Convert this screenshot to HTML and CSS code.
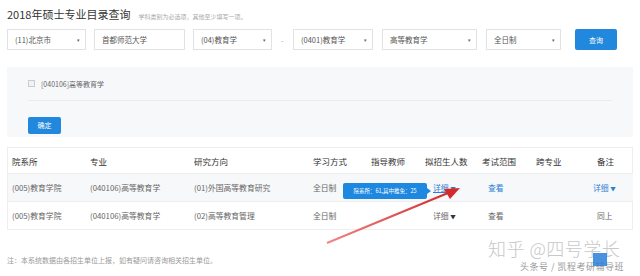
FILE: index.html
```html
<!DOCTYPE html>
<html lang="zh-CN">
<head>
    <meta charset="UTF-8">
    <meta name="viewport" content="width=device-width, initial-scale=1.0">
    <title>2018年硕士专业目录查询</title>
    <link rel="stylesheet" href="styles.css">
</head>
<body>
    <div class="page">
        <div class="title-row">
            <h2>2018年硕士专业目录查询</h2>
            <span class="hint">学科类别为必选项，其他至少填写一项。</span>
        </div>

        <div class="search-row">
            <div class="field select w79">(11)北京市<span class="caret">▾</span></div>
            <div class="field w91">首都师范大学</div>
            <div class="field select w79">(04)教育学<span class="caret">▾</span></div>
            <span class="dash">-</span>
            <div class="field select w80">(0401)教育学<span class="caret">▾</span></div>
            <div class="field select w95">高等教育学<span class="caret">▾</span></div>
            <div class="field select w75">全日制<span class="caret">▾</span></div>
            <button class="btn btn-search">查询</button>
        </div>

        <div class="panel">
            <label class="check-row">
                <span class="checkbox"></span>[040106]高等教育学
            </label>
            <div class="panel-foot">
                <button class="btn btn-ok">确定</button>
            </div>
        </div>

        <div class="result">
            <table>
                <colgroup>
                    <col style="width:78px">
                    <col style="width:104px">
                    <col style="width:119px">
                    <col style="width:58px">
                    <col style="width:54px">
                    <col style="width:57px">
                    <col style="width:54px">
                    <col style="width:61px">
                    <col style="width:40px">
                </colgroup>
                <thead>
                    <tr>
                        <th>院系所</th>
                        <th>专业</th>
                        <th>研究方向</th>
                        <th>学习方式</th>
                        <th>指导教师</th>
                        <th>拟招生人数</th>
                        <th>考试范围</th>
                        <th>跨专业</th>
                        <th>备注</th>
                    </tr>
                </thead>
                <tbody>
                    <tr class="striped">
                        <td>(005)教育学院</td>
                        <td>(040106)高等教育学</td>
                        <td>(01)外国高等教育研究</td>
                        <td>全日制</td>
                        <td></td>
                        <td class="more"><a class="link underline">详细</a> <span class="tri link">▼</span></td>
                        <td class="mid"><a class="link">查看</a></td>
                        <td></td>
                        <td class="last"><a class="link">详细 <span class="tri link">▼</span></a></td>
                    </tr>
                    <tr>
                        <td>(005)教育学院</td>
                        <td>(040106)高等教育学</td>
                        <td>(02)高等教育管理</td>
                        <td>全日制</td>
                        <td></td>
                        <td class="more">详细 <span class="tri">▼</span></td>
                        <td class="mid">查看</td>
                        <td></td>
                        <td class="same">同上</td>
                    </tr>
                </tbody>
            </table>
            <div class="tooltip">院系所：61,其中推免：25</div>
        </div>

        <p class="note">注：本系统数据由各招生单位上报，如有疑问请咨询相关招生单位。</p>

        <svg class="arrow" width="640" height="276" viewBox="0 0 640 276">
            <defs>
                <linearGradient id="arrowGrad" x1="0" y1="1" x2="1" y2="0">
                    <stop offset="0" stop-color="#e88" />
                    <stop offset="1" stop-color="#d42a2a" />
                </linearGradient>
            </defs>
            <line x1="327" y1="243" x2="448" y2="193" stroke="url(#arrowGrad)" stroke-width="2" />
            <polygon points="460,188 444,189 450,199" fill="#d42a2a" />
        </svg>

        <div class="watermark">
            <div class="wm-big">知乎 @四号学长</div>
            <div class="wm-small">头条号 / 凯程考研辅导班</div>
            <span class="wm-badge"></span>
        </div>
    </div>
</body>
</html>
```

FILE: styles.css
```css
body {
    margin: 0;
    padding: 0;
    background-color: #fff;
    font-family: "Noto Sans CJK SC", "Liberation Sans", sans-serif;
    color: #555;
}

.page {
    position: relative;
    width: 640px;
    height: 276px;
    padding: 0 7px;
    box-sizing: border-box;
    overflow: hidden;
}

.title-row {
    display: flex;
    align-items: baseline;
    height: 29px;
    padding-top: 6px;
    box-sizing: border-box;
}

h2 {
    margin: 0;
    font-size: 11px;
    font-weight: normal;
    color: #333;
    line-height: 16px;
}

.hint {
    margin-left: 8px;
    font-size: 6px;
    color: #aaa;
}

.search-row {
    display: flex;
    align-items: center;
    height: 21px;
}

.field {
    position: relative;
    height: 21px;
    margin-right: 8px;
    padding-left: 7px;
    border: 1px solid #e2e2e2;
    background-color: #fff;
    box-sizing: border-box;
    font-size: 7.5px;
    line-height: 19px;
    color: #555;
}

.caret {
    position: absolute;
    right: 5px;
    top: 0;
    font-size: 5px;
    color: #666;
}

.w79 { width: 79px; }
.w91 { width: 91px; }
.w80 { width: 80px; margin-right: 9px; }
.w95 { width: 95px; margin-right: 9px; }
.w75 { width: 75px; margin-right: 14px; }

.dash {
    width: 12px;
    margin-left: 1px;
    font-size: 7px;
    color: #999;
}

.btn {
    border: none;
    border-radius: 2px;
    background-color: #2188dd;
    color: #fff;
    font-family: inherit;
    padding: 0;
    cursor: pointer;
}

.btn-search {
    width: 42px;
    height: 21px;
    font-size: 7px;
}

.panel {
    margin-top: 17px;
    height: 70px;
    padding: 0 21px 0 21px;
    background-color: #f7f8fa;
    box-sizing: border-box;
}

.check-row {
    display: flex;
    align-items: center;
    height: 33px;
    border-bottom: 1px solid #ececee;
    font-size: 7px;
    color: #666;
}

.checkbox {
    width: 5px;
    height: 5px;
    margin-right: 6px;
    border: 1px solid #ccc;
    background-color: #f2f2f2;
}

.panel-foot {
    padding-top: 8px;
}

.btn-ok {
    width: 33px;
    height: 17px;
    font-size: 7px;
}

.result {
    position: relative;
    margin-top: 10px;
    border: 1px solid #eee;
    border-bottom: none;
}

table {
    width: 625px;
    table-layout: fixed;
    border-collapse: collapse;
}

th, td {
    padding: 0 0 0 4px;
    text-align: left;
    white-space: nowrap;
    border-bottom: 1px solid #eee;
}

th {
    height: 25px;
    font-size: 8.5px;
    font-weight: normal;
    color: #333;
}

td {
    height: 27px;
    font-size: 7.8px;
    color: #666;
}

tr.striped td {
    background-color: #f7f8fa;
}

.link {
    color: #2a7fd4;
}

.underline {
    text-decoration: underline;
}

.tri {
    font-size: 5.5px;
    color: #333;
}

.tri.link {
    color: #2a7fd4;
}

td.more {
    padding-left: 12px;
}

td.mid {
    padding-left: 10px;
}

td.last {
    padding-left: 0;
}

td.same {
    padding-left: 4px;
    color: #666;
}

.tooltip {
    position: absolute;
    left: 335px;
    top: 35px;
    width: 84px;
    height: 16px;
    border-radius: 2px;
    background-color: #1e88e0;
    color: #fff;
    font-size: 5.5px;
    line-height: 16px;
    text-align: center;
}

.tooltip::after {
    content: "";
    position: absolute;
    right: -4px;
    top: 5px;
    border-top: 3px solid transparent;
    border-bottom: 3px solid transparent;
    border-left: 4px solid #1e88e0;
}

.note {
    margin: 25px 0 0 0;
    font-size: 7px;
    color: #999;
}

.arrow {
    position: absolute;
    left: 0;
    top: 0;
    pointer-events: none;
}

.watermark {
    position: absolute;
    left: 488px;
    top: 239px;
    width: 152px;
}

.wm-big {
    font-size: 18px;
    line-height: 19px;
    letter-spacing: 0.5px;
    color: #c8c8c8;
    font-weight: 300;
}

.wm-small {
    margin-top: 2px;
    margin-left: 32px;
    font-size: 9px;
    line-height: 13px;
    letter-spacing: 0.5px;
    color: #999;
}

.wm-badge {
    position: absolute;
    left: 105px;
    top: 14px;
    width: 14px;
    height: 13px;
    background-color: #2c7fd8;
    opacity: 0.85;
}
```
